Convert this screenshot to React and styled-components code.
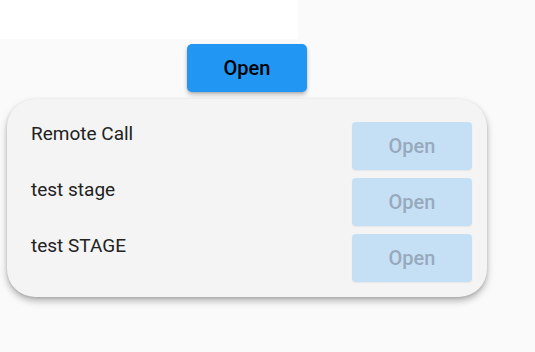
import React from 'react';
import styled, { createGlobalStyle } from 'styled-components';

const Global = createGlobalStyle`
  html, body {
    margin: 0;
    padding: 0;
    background: #fafafa;
    font-family: Roboto, "Liberation Sans", sans-serif;
  }
`;

const Page = styled.div`
  width: 535px;
  height: 352px;
  display: flex;
  flex-direction: column;
  background: #fafafa;
`;

const TopStrip = styled.div`
  width: 298px;
  height: 39px;
  background: #ffffff;
`;

const PrimaryButton = styled.button`
  align-self: flex-start;
  margin: 5px 0 0 187px;
  width: 120px;
  height: 48px;
  border: none;
  border-radius: 5px;
  background: #2196f3;
  color: #000;
  font-family: Roboto, "Liberation Sans", sans-serif;
  font-size: 20px;
  font-weight: 500;
  box-shadow: 0 3px 4px rgba(0, 0, 0, 0.22), 0 1px 2px rgba(0, 0, 0, 0.12);
  cursor: pointer;
`;

const Card = styled.div`
  margin: 7px 0 0 7px;
  width: 480px;
  height: 198px;
  box-sizing: border-box;
  padding: 23px 15px 15px 24px;
  background: #f4f4f4;
  border-radius: 28px;
  box-shadow: 0 4px 7px rgba(0, 0, 0, 0.28), 0 1px 3px rgba(0, 0, 0, 0.12);
  display: flex;
  flex-direction: column;
  gap: 8px;
`;

const Row = styled.div`
  display: flex;
  justify-content: space-between;
  align-items: flex-start;
  height: 48px;
`;

const Label = styled.span`
  padding-top: 1px;
  font-size: 19px;
  color: #222;
  line-height: 22px;
`;

const DisabledButton = styled.button`
  width: 120px;
  height: 48px;
  border: none;
  border-radius: 4px;
  background: #c5e0f5;
  color: #98a9bc;
  font-family: Roboto, "Liberation Sans", sans-serif;
  font-size: 20px;
  font-weight: 500;
  box-shadow: 0 1px 2px rgba(0, 0, 0, 0.06);
`;

const items = ['Remote Call', 'test stage', 'test STAGE'];

export default function App() {
  return (
    <Page>
      <Global />
      <TopStrip />
      <PrimaryButton>Open</PrimaryButton>
      <Card>
        {items.map((name) => (
          <Row key={name}>
            <Label>{name}</Label>
            <DisabledButton disabled>Open</DisabledButton>
          </Row>
        ))}
      </Card>
    </Page>
  );
}
